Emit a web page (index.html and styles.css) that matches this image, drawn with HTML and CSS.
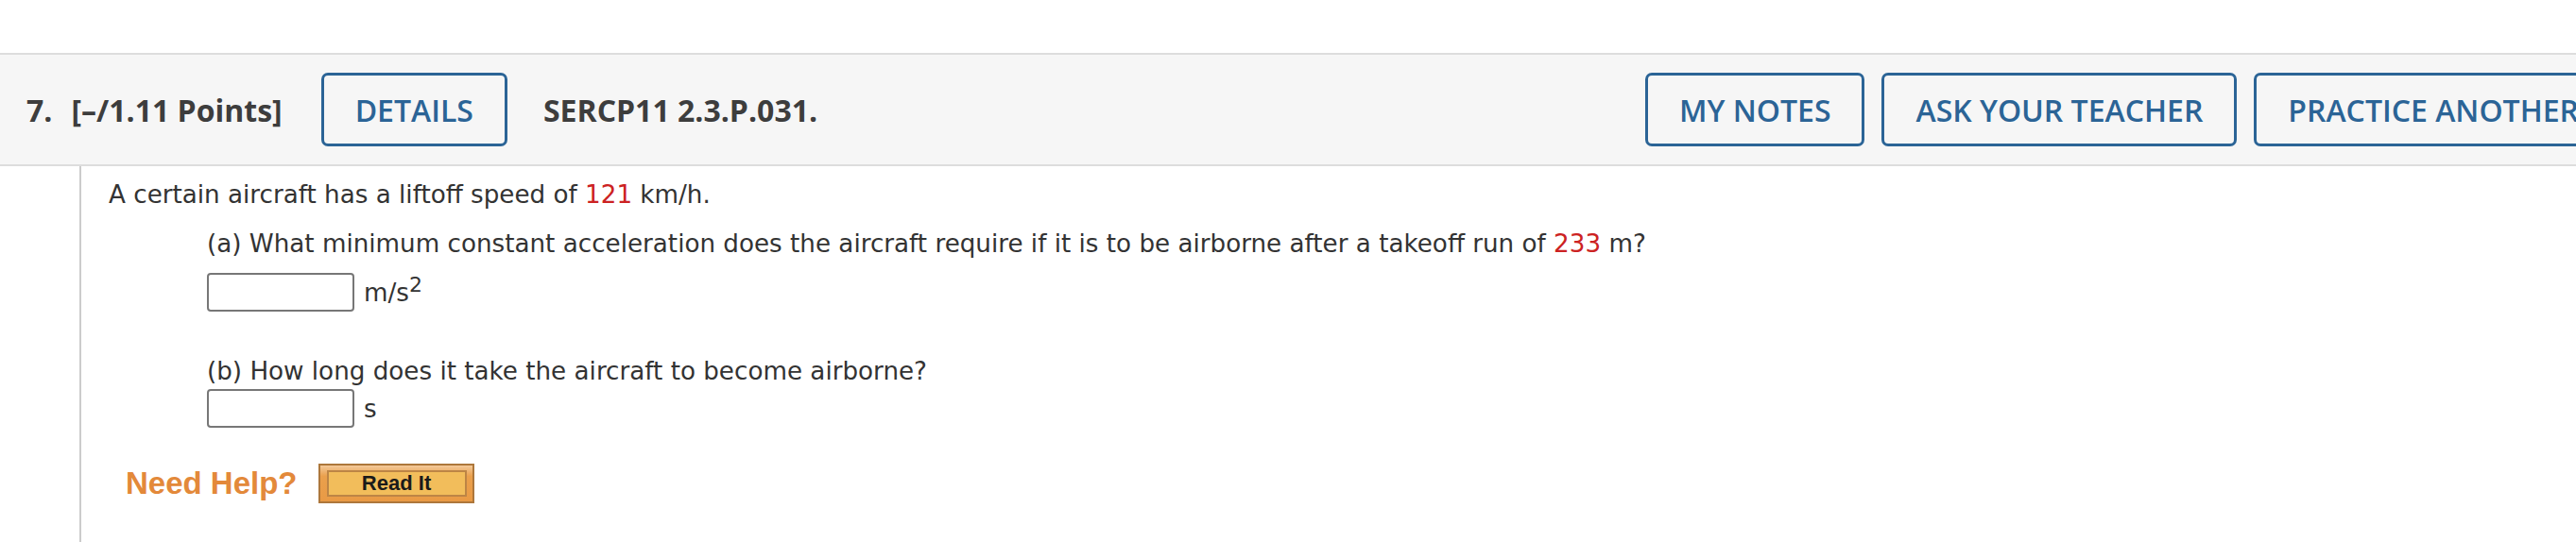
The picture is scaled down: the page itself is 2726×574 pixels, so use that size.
FILE: index.html
```html
<!DOCTYPE html>
<html lang="en">
<head>
  <meta charset="UTF-8">
  <meta name="viewport" content="width=device-width, initial-scale=1.0">
  <title>Question 7</title>
  <link rel="stylesheet" href="styles.css">
</head>
<body>
  <div class="question">
    <div class="q-header">
      <span class="q-num">7.</span>
      <span class="q-points">[&ndash;/1.11 Points]</span>
      <button class="btn">DETAILS</button>
      <span class="q-code">SERCP11 2.3.P.031.</span>
      <div class="q-actions">
        <button class="btn">MY NOTES</button>
        <button class="btn">ASK YOUR TEACHER</button>
        <button class="btn">PRACTICE ANOTHER</button>
      </div>
    </div>

    <div class="q-body">
      <p class="q-intro">A certain aircraft has a liftoff speed of <span class="val">121</span> km/h.</p>

      <div class="q-part">
        <p>(a) What minimum constant acceleration does the aircraft require if it is to be airborne after a takeoff run of <span class="val">233</span> m?</p>
        <div class="answer">
          <input type="text" class="answer-box">
          <span class="unit">m/s<sup>2</sup></span>
        </div>
      </div>

      <div class="q-part part-b">
        <p>(b) How long does it take the aircraft to become airborne?</p>
        <div class="answer">
          <input type="text" class="answer-box">
          <span class="unit">s</span>
        </div>
      </div>

      <div class="help">
        <span class="need-help">Need Help?</span>
        <button class="read-it"><span class="read-it-inner">Read It</span></button>
      </div>
    </div>
  </div>
</body>
</html>
```

FILE: styles.css
```css
html, body {
  margin: 0;
  overflow: hidden;
  background: #fff;
}
.question {
  width: 2781px;
  padding-top: 56px;
}
.q-header {
  display: flex;
  align-items: center;
  height: 116px;
  padding-left: 28px;
  background-color: #f6f6f6;
  border-top: 2px solid #dddddd;
  border-bottom: 2px solid #dddddd;
  font-family: "Open Sans", "Liberation Sans", sans-serif;
  font-size: 32px;
  font-weight: 700;
  color: #3d3d3d;
}
.q-num {
  margin-right: 20px;
}
.q-points {
  margin-right: 41px;
}
.q-code {
  margin-left: 38px;
}
.btn {
  height: 78px;
  padding: 0 33px;
  border: 3px solid #2b6496;
  border-radius: 7px;
  background: transparent;
  color: #2b6496;
  font-family: "Open Sans", "Liberation Sans", sans-serif;
  font-size: 32px;
  font-weight: 600;
  cursor: pointer;
}
.q-actions {
  display: flex;
  gap: 18px;
  margin-left: auto;
  margin-right: 16px;
}

.q-body {
  margin-left: 84px;
  border-left: 2px solid #cccccc;
  padding: 12px 0 60px 29px;
  font-family: "DejaVu Sans", Verdana, sans-serif;
  font-size: 26.2px;
  line-height: 36px;
  color: #333333;
}
.q-body p {
  margin: 0;
}
.val {
  color: #cc2222;
}
.q-part {
  padding-left: 104px;
  margin-top: 16px;
}
.part-b {
  margin-top: 45px;
}
.answer {
  display: flex;
  align-items: center;
  gap: 10px;
  margin-top: 13px;
}
.part-b .answer {
  margin-top: 1px;
}
.answer-box {
  width: 156px;
  height: 41px;
  box-sizing: border-box;
  border: 2px solid #777777;
  border-radius: 4px;
  background: #fff;
}
.unit sup {
  font-size: 22px;
  line-height: 0;
}

.help {
  display: flex;
  align-items: center;
  gap: 22px;
  margin-top: 38px;
  margin-left: 18px;
}
.need-help {
  font-family: "Liberation Sans", Arial, sans-serif;
  font-size: 33px;
  font-weight: 700;
  color: #e3893a;
}
.read-it {
  width: 165px;
  height: 42px;
  padding: 5px 6px 5px 7px;
  border: 2px solid #ad773b;
  background: linear-gradient(#f4c999, #eaa04c 30%, #e99a45);
  cursor: pointer;
}
.read-it-inner {
  display: flex;
  align-items: center;
  justify-content: center;
  height: 100%;
  border: 2px solid #bd8545;
  background-color: #f2bd5b;
  font-family: "Liberation Sans", Arial, sans-serif;
  font-size: 22px;
  font-weight: 700;
  color: #1a1a1a;
  box-sizing: border-box;
}
```
